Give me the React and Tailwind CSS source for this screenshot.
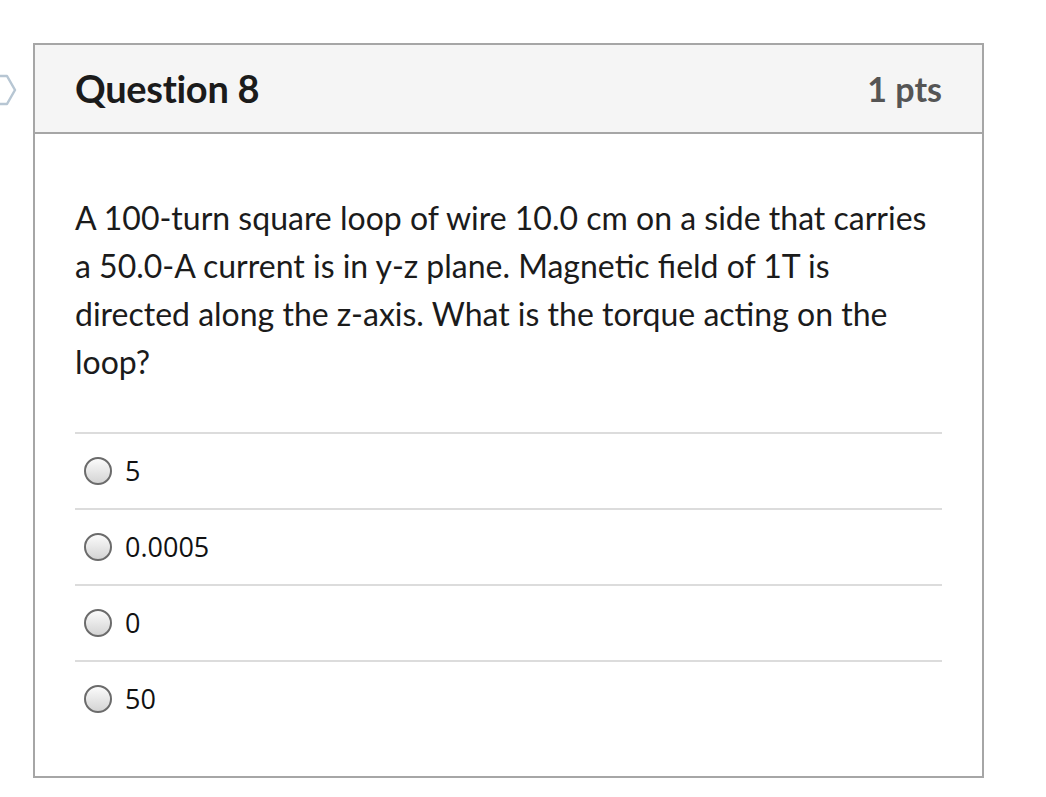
import React from "react";

const answers = ["5", "0.0005", "0", "50"];

function Radio() {
  return (
    <span className="inline-block w-[28px] h-[28px] rounded-full border-2 border-[#6b6b6b] bg-gradient-to-b from-[#fbfbfb] to-[#d4d4d4] shrink-0" />
  );
}

export default function App() {
  return (
    <div className="w-[1046px] h-[797px] bg-white relative overflow-hidden font-['Lato',sans-serif]">
      {/* left chevron, partly off-screen */}
      <svg className="absolute left-0 top-[74px]" width="18" height="32" viewBox="0 0 18 32">
        <path d="M-4 2 L7 2 L15 16 L7 30 L-4 30" fill="none" stroke="#b7c6d3" strokeWidth="2.5" strokeLinejoin="round" />
      </svg>

      <div className="pt-[43px] pl-[33px]">
        <div className="w-[951px] h-[735px] border-2 border-[#a6a6a6] flex flex-col">
          {/* Header */}
          <div className="h-[89px] bg-[#f5f5f5] border-b-2 border-[#a6a6a6] flex items-center justify-between pl-[40px] pr-[40px]">
            <h2 className="text-[38px] font-bold text-[#1b1b1b] tracking-[-0.3px]">Question 8</h2>
            <span className="text-[34px] font-bold text-[#555555]">1 pts</span>
          </div>

          {/* Body */}
          <div className="pl-[40px] pr-[40px] pt-[60px]">
            <p className="text-[32px] leading-[48px] text-[#1b1b1b]">
              A 100-turn square loop of wire 10.0 cm on a side that carries a 50.0-A current is in y-z plane. Magnetic field of 1T is directed along the z-axis. What is the torque acting on the loop?
            </p>

            <div className="mt-[46px]">
              {answers.map((a) => (
                <div key={a} className="h-[76px] border-t-2 border-[#dcdcdc] flex items-center gap-[13px] pl-[9px]">
                  <Radio />
                  <span className="text-[27px] text-[#111111] font-['Open_Sans',sans-serif]">{a}</span>
                </div>
              ))}
            </div>
          </div>
        </div>
      </div>
    </div>
  );
}
